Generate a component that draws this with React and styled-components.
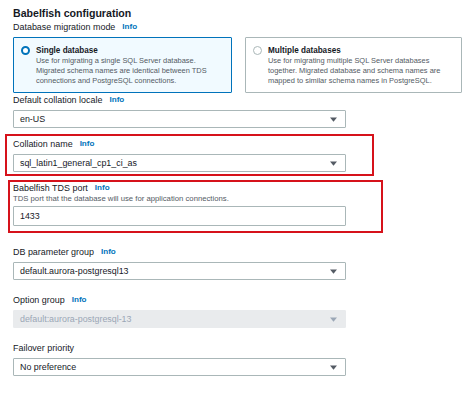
import React from "react";
import styled, { createGlobalStyle } from "styled-components";

const GlobalStyle = createGlobalStyle`
  html, body {
    margin: 0;
    padding: 0;
    background: #ffffff;
  }
  body {
    font-family: "Liberation Sans", Arial, sans-serif;
    color: #16191f;
  }
`;

const Page = styled.div`
  width: 474px;
  height: 393px;
  overflow: hidden;
  padding: 3px 0 0 13px;
  box-sizing: border-box;
`;

const Title = styled.div`
  font-size: 10.6px;
  font-weight: 700;
  line-height: 20px;
  height: 18px;
  color: #16191f;
`;

const Label = styled.div`
  display: flex;
  align-items: center;
  gap: 7px;
  font-size: 8.95px;
  line-height: 12px;
  color: #16191f;
  margin-bottom: ${({ $tight }) => ($tight ? "0" : "4px")};
`;

const Info = styled.span`
  font-size: 8.1px;
  font-weight: 700;
  color: #0073bb;
`;

const Hint = styled.div`
  font-size: 7.72px;
  line-height: 10px;
  color: #545b64;
  margin-bottom: 2px;
`;

const Cards = styled.div`
  display: grid;
  grid-template-columns: 219px 217px;
  gap: 13px;
  margin: 3px 0 1px;
`;

const Card = styled.div`
  display: flex;
  gap: 6px;
  height: 56px;
  box-sizing: border-box;
  padding: 7px 8px 0 7px;
  border: 1px solid ${({ $active }) => ($active ? "#0073bb" : "#aab7b8")};
  background: ${({ $active }) => ($active ? "#f1faff" : "#ffffff")};
  border-radius: 1px;
`;

const Radio = styled.span`
  flex: none;
  width: 9px;
  height: 9px;
  margin-top: 1px;
  border-radius: 50%;
  box-sizing: border-box;
  background: #ffffff;
  border: ${({ $checked }) =>
    $checked ? "2.6px solid #0073bb" : "1px solid #aab7b8"};
`;

const CardBody = styled.div`
  display: flex;
  flex-direction: column;
`;

const CardTitle = styled.div`
  font-size: 8.15px;
  font-weight: 700;
  line-height: 11px;
  color: #16191f;
`;

const CardText = styled.div`
  font-size: 7.45px;
  line-height: 10px;
  color: #545b64;
`;

const Field = styled.div`
  margin-top: ${({ $top }) => $top || 0}px;
`;

const Box = styled.div`
  display: flex;
  align-items: center;
  justify-content: space-between;
  width: 333px;
  height: ${({ $h }) => $h || 18}px;
  box-sizing: border-box;
  padding: 0 8px 0 6px;
  border: 1px solid ${({ $disabled }) => ($disabled ? "#e9ebed" : "#aab7b8")};
  border-radius: 1px;
  background: ${({ $disabled }) => ($disabled ? "#e9ebed" : "#ffffff")};
  color: ${({ $disabled }) => ($disabled ? "#9ba7b6" : "#16191f")};
  font-size: 8.9px;
`;

const Highlight = styled.div`
  box-sizing: border-box;
  margin-left: ${({ $left }) => $left}px;
  width: ${({ $width }) => $width}px;
  margin-top: ${({ $top }) => $top}px;
  padding: ${({ $pad }) => $pad};
  border: 2px solid #d6121b;
`;

const Caret = ({ disabled }) => (
  <svg width="7" height="5" viewBox="0 0 7 5">
    <path d="M0 0.5 H7 L3.5 4.8 Z" fill={disabled ? "#9ba7b6" : "#545b64"} />
  </svg>
);

const Select = ({ value, disabled }) => (
  <Box $disabled={disabled}>
    <span>{value}</span>
    <Caret disabled={disabled} />
  </Box>
);

export default function App() {
  return (
    <Page>
      <GlobalStyle />
      <Title>Babelfish configuration</Title>
      <Label>
        Database migration mode <Info>Info</Info>
      </Label>
      <Cards>
        <Card $active>
          <Radio $checked />
          <CardBody>
            <CardTitle>Single database</CardTitle>
            <CardText>
              Use for migrating a single SQL Server database.
              <br />
              Migrated schema names are identical between TDS
              <br />
              connections and PostgreSQL connections.
            </CardText>
          </CardBody>
        </Card>
        <Card>
          <Radio />
          <CardBody>
            <CardTitle>Multiple databases</CardTitle>
            <CardText>
              Use for migrating multiple SQL Server databases
              <br />
              together. Migrated database and schema names are
              <br />
              mapped to similar schema names in PostgreSQL.
            </CardText>
          </CardBody>
        </Card>
      </Cards>

      <Field>
        <Label>
          Default collation locale <Info>Info</Info>
        </Label>
        <Select value="en-US" />
      </Field>

      <Highlight $left={-8} $width={369} $top={6} $pad="2px 0 2px 6px">
        <Label>
          Collation name <Info>Info</Info>
        </Label>
        <Select value="sql_latin1_general_cp1_ci_as" />
      </Highlight>

      <Highlight $left={-5} $width={375} $top={4} $pad="0 0 5px 3px">
        <Label $tight>
          Babelfish TDS port <Info>Info</Info>
        </Label>
        <Hint>TDS port that the database will use for application connections.</Hint>
        <Box $h={20}>1433</Box>
      </Highlight>

      <Field $top={13}>
        <Label>
          DB parameter group <Info>Info</Info>
        </Label>
        <Select value="default.aurora-postgresql13" />
      </Field>

      <Field $top={14}>
        <Label>
          Option group <Info>Info</Info>
        </Label>
        <Select value="default:aurora-postgresql-13" disabled />
      </Field>

      <Field $top={14}>
        <Label>Failover priority</Label>
        <Select value="No preference" />
      </Field>
    </Page>
  );
}
